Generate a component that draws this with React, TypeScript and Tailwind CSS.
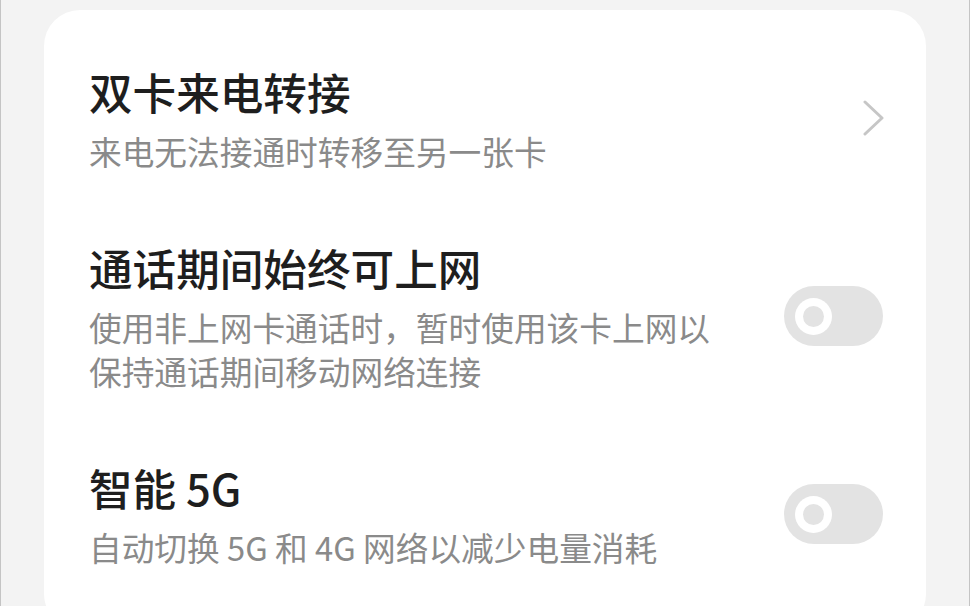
import React from "react";

const font = {
  fontFamily: '"Noto Sans CJK SC", "Noto Sans", sans-serif',
};

function Chevron() {
  return (
    <svg width="24" height="36" viewBox="0 0 24 36" fill="none" className="shrink-0">
      <path
        d="M3 2 L20 18 L3 34"
        stroke="#c6c6c6"
        strokeWidth="3"
        strokeLinecap="round"
        strokeLinejoin="round"
      />
    </svg>
  );
}

function Toggle() {
  return (
    <div className="flex h-[60px] w-[99px] shrink-0 items-center rounded-full bg-[#e3e3e3] pl-[11px]">
      <div className="flex h-[37px] w-[37px] items-center justify-center rounded-full bg-white">
        <div className="h-[21px] w-[21px] rounded-full bg-[#e3e3e3]" />
      </div>
    </div>
  );
}

type Row = {
  title: string;
  lines: string[];
  control: "chevron" | "toggle";
};

const rows: Row[] = [
  {
    title: "双卡来电转接",
    lines: ["来电无法接通时转移至另一张卡"],
    control: "chevron",
  },
  {
    title: "通话期间始终可上网",
    lines: ["使用非上网卡通话时，暂时使用该卡上网以", "保持通话期间移动网络连接"],
    control: "toggle",
  },
  {
    title: "智能 5G",
    lines: ["自动切换 5G 和 4G 网络以减少电量消耗"],
    control: "toggle",
  },
];

export default function App() {
  return (
    <div
      className="h-[606px] w-[970px] overflow-hidden border-x border-[#c4c4c4] bg-[#f3f3f3] pl-[43px] pr-[43px] pt-[10px]"
      style={font}
    >
      <div className="h-[620px] rounded-[36px] bg-white pt-[20px]">
        {rows.map((row) => (
          <div key={row.title} className="flex items-center py-[33px] pl-[45px] pr-[40px]">
            <div className="flex-1">
              <div className="text-[43.6px] font-medium leading-[56px] text-[#1e1e1e]">
                {row.title}
              </div>
              <div className="mt-[10px] text-[32.7px] leading-[44px] text-[#8a8a8a]">
                {row.lines.map((l) => (
                  <div key={l}>{l}</div>
                ))}
              </div>
            </div>
            {row.control === "chevron" ? (
              <Chevron />
            ) : (
              <div className="mr-[3px]">
                <Toggle />
              </div>
            )}
          </div>
        ))}
      </div>
    </div>
  );
}
